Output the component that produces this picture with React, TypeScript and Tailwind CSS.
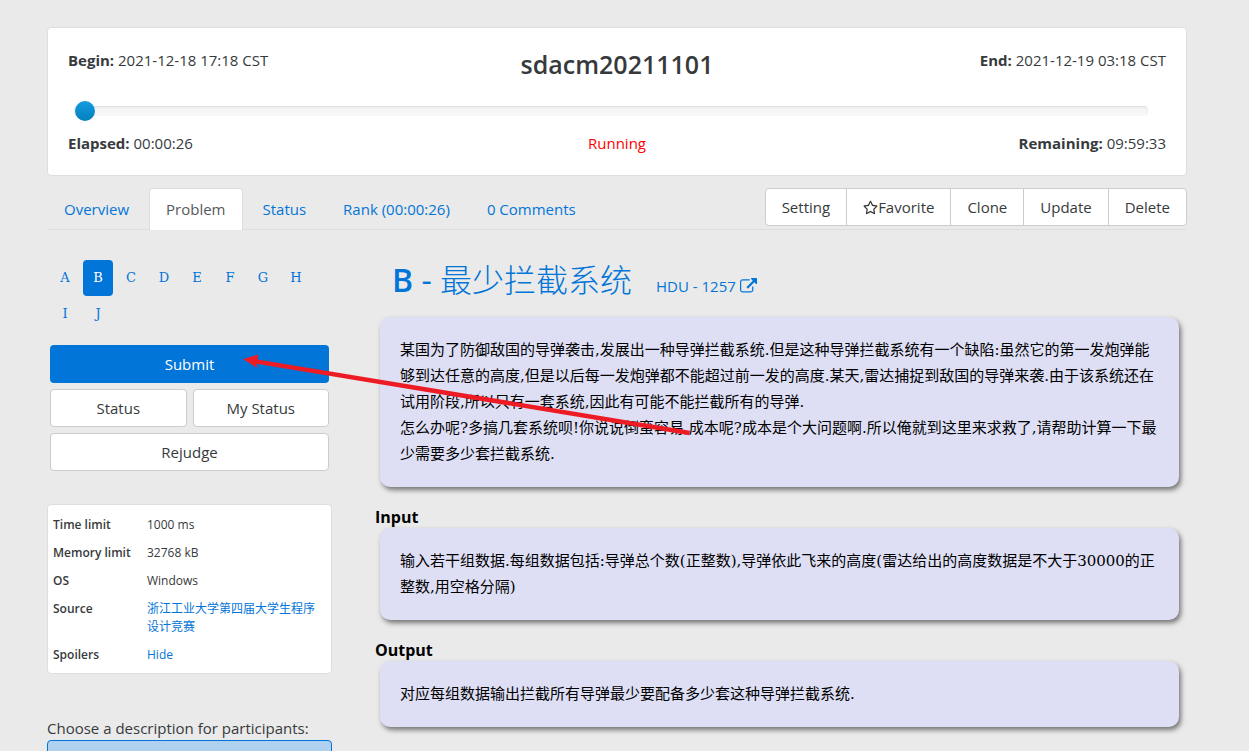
import { FaRegStar } from 'react-icons/fa';

const tabs = ['Overview', 'Problem', 'Status', 'Rank (00:00:26)', '0 Comments'];
const actions = ['Setting', 'Favorite', 'Clone', 'Update', 'Delete'];
const letters = ['A', 'B', 'C', 'D', 'E', 'F', 'G', 'H', 'I', 'J'];

const sections = [
  {
    title: '',
    paragraphs: [
      '某国为了防御敌国的导弹袭击,发展出一种导弹拦截系统.但是这种导弹拦截系统有一个缺陷:虽然它的第一发炮弹能够到达任意的高度,但是以后每一发炮弹都不能超过前一发的高度.某天,雷达捕捉到敌国的导弹来袭.由于该系统还在试用阶段,所以只有一套系统,因此有可能不能拦截所有的导弹.',
      '怎么办呢?多搞几套系统呗!你说说倒蛮容易,成本呢?成本是个大问题啊.所以俺就到这里来求救了,请帮助计算一下最少需要多少套拦截系统.',
    ],
  },
  {
    title: 'Input',
    paragraphs: [
      '输入若干组数据.每组数据包括:导弹总个数(正整数),导弹依此飞来的高度(雷达给出的高度数据是不大于30000的正整数,用空格分隔)',
    ],
  },
  {
    title: 'Output',
    paragraphs: ['对应每组数据输出拦截所有导弹最少要配备多少套这种导弹拦截系统.'],
  },
];

const plainButton = 'h-[38px] rounded border border-[#ccc] bg-white text-[#373a3c] hover:bg-gray-100';

function ExternalLinkIcon() {
  return (
    <svg className="size-[17px]" viewBox="0 0 1792 1792" fill="currentColor" aria-hidden="true">
      <path d="M1408 928v320q0 119-84.5 203.5t-203.5 84.5h-832q-119 0-203.500-84.500t-84.500-203.500v-832q0-119 84.500-203.500t203.500-84.500h704q14 0 23 9t9 23v64q0 14-9 23t-23 9h-704q-66 0-113 47t-47 113v832q0 66 47 113t113 47h832q66 0 113-47t47-113v-320q0-14 9-23t23-9h64q14 0 23 9t9 23zm384-864v512q0 26-19 45t-45 19-45-19l-176-176-652 652q-10 10-23 10t-23-10l-114-114q-10-10-10-23t10-23l652-652-176-176q-19-19-19-45t19-45 45-19h512q26 0 45 19t19 45z" />
    </svg>
  );
}

function ContestHeader() {
  return (
    <header className="rounded border border-[#dedede] bg-white px-5 py-5">
      <div className="grid grid-cols-3 items-start">
        <div>
          <b>Begin:</b> 2021-12-18 17:18 CST
        </div>
        <h1 className="text-center text-[25px] leading-8 font-semibold">sdacm20211101</h1>
        <div className="text-right">
          <b>End:</b> 2021-12-19 03:18 CST
        </div>
      </div>
      <input
        type="range"
        min={0}
        max={36000}
        defaultValue={26}
        aria-label="Contest progress"
        className="mt-[26px] ml-1.5 block h-[10px] w-[calc(100%-24px)] appearance-none rounded bg-[#f7f7f7] bg-linear-to-b from-[#f3f3f3] to-[#f9f9f9] shadow-[inset_0_1px_2px_rgba(0,0,0,0.1)] [&::-webkit-slider-thumb]:size-5 [&::-webkit-slider-thumb]:appearance-none [&::-webkit-slider-thumb]:rounded-full [&::-webkit-slider-thumb]:bg-linear-to-b [&::-webkit-slider-thumb]:from-[#149bdf] [&::-webkit-slider-thumb]:to-[#0480be]"
      />
      <div className="mt-[15px] grid grid-cols-3">
        <div>
          <b>Elapsed:</b> 00:00:26
        </div>
        <div className="text-center text-[#ff0000]">Running</div>
        <div className="text-right">
          <b>Remaining:</b> 09:59:33
        </div>
      </div>
    </header>
  );
}

function ContestNav() {
  return (
    <nav className="mt-3 flex items-start justify-between border-b border-[#ddd]">
      <div className="-mb-px flex gap-[3px]">
        {tabs.map((tab) => (
          <a
            key={tab}
            href="#"
            className={
              tab === 'Problem'
                ? 'h-[42px] rounded-t border border-b-0 border-[#ddd] bg-white px-4 pt-2 text-[#55595c]'
                : 'h-[42px] border border-b-0 border-transparent px-4 pt-2 text-[#0275d8]'
            }
          >
            {tab}
          </a>
        ))}
      </div>
      <div className="flex">
        {actions.map((action) => (
          <button
            key={action}
            className="-ml-px flex h-[38px] items-center border border-[#ccc] bg-white px-4 first:rounded-l last:rounded-r hover:bg-gray-100"
          >
            {action === 'Favorite' && <FaRegStar className="size-[15px]" />}
            {action}
          </button>
        ))}
      </div>
    </nav>
  );
}

function Sidebar() {
  return (
    <aside className="w-[285px] shrink-0">
      <div className='flex flex-wrap gap-x-[3px] px-[3px] font-["DejaVu_Serif",serif] text-[13px]'>
        {letters.map((letter) => (
          <a
            key={letter}
            href="#"
            className={
              letter === 'B'
                ? 'flex h-9 w-[30px] items-center justify-center rounded bg-[#0275d8] text-white'
                : 'flex h-9 w-[30px] items-center justify-center rounded text-[#0275d8]'
            }
          >
            {letter}
          </a>
        ))}
      </div>

      <div className="mt-[13px] grid grid-cols-2 gap-1.5 px-[3px]">
        <button className="col-span-2 h-[38px] rounded bg-[#0275d8] text-white hover:bg-blue-700">Submit</button>
        <button className={plainButton}>Status</button>
        <button className={plainButton}>My Status</button>
        <button className={`col-span-2 ${plainButton}`}>Rejudge</button>
      </div>

      <div className="mt-[33px] rounded border border-[#dedede] bg-white pt-1.5 pb-1">
        <table className="w-full table-fixed text-left text-xs leading-[18px]">
          <tbody>
            <tr>
              <th className="w-[94px] py-[5px] pl-[5px] align-top font-semibold">Time limit</th>
              <td className="py-[5px] pr-3 pl-[5px]">1000 ms</td>
            </tr>
            <tr>
              <th className="py-[5px] pl-[5px] align-top font-semibold">Memory limit</th>
              <td className="py-[5px] pr-3 pl-[5px]">32768 kB</td>
            </tr>
            <tr>
              <th className="py-[5px] pl-[5px] align-top font-semibold">OS</th>
              <td className="py-[5px] pr-3 pl-[5px]">Windows</td>
            </tr>
            <tr>
              <th className="py-[5px] pl-[5px] align-top font-semibold">Source</th>
              <td className="py-[5px] pr-3 pl-[5px]">
                <a href="#" className="text-[#0275d8]">浙江工业大学第四届大学生程序设计竞赛</a>
              </td>
            </tr>
            <tr>
              <th className="py-[5px] pl-[5px] align-top font-semibold">Spoilers</th>
              <td className="py-[5px] pr-3 pl-[5px]">
                <a href="#" className="text-[#0275d8]">Hide</a>
              </td>
            </tr>
          </tbody>
        </table>
      </div>

      <p className="mt-[42px]">Choose a description for participants:</p>
      <div className="h-16 rounded-t border border-[#0275d8] bg-[#b0d0f0]" />
    </aside>
  );
}

function Problem() {
  return (
    <main className="min-w-0 flex-1 pr-2">
      <div className="flex items-baseline gap-6 pl-[17px] text-[#0275d8]">
        <h2 className="text-[32px] leading-10 font-light">
          <span className="font-semibold">B</span> <span className="font-medium">-</span> 最少拦截系统
        </h2>
        <a href="#" className="flex items-center gap-1">
          HDU - 1257 <ExternalLinkIcon />
        </a>
      </div>
      <div className="mt-[17px]">
        {sections.map((section) => (
          <section key={section.title} className="mb-5">
            {section.title && <h3 className="text-base leading-[21px] font-bold text-black">{section.title}</h3>}
            <div className='ml-[5px] rounded-[10px] bg-[#dedff5] p-5 font-["DejaVu_Serif","Noto_Sans_CJK_SC",serif] text-[15px] leading-[26px] text-black shadow-[2px_3px_5px_rgba(0,0,0,0.5)]'>
              {section.paragraphs.map((text) => (
                <p key={text}>{text}</p>
              ))}
            </div>
          </section>
        ))}
      </div>
    </main>
  );
}

export default function App() {
  return (
    <div className='relative h-screen overflow-hidden bg-[#eaeaea] pt-[27px] pr-[62px] pl-[47px] font-["Open_Sans","Noto_Sans_CJK_SC",sans-serif] text-[15px] leading-6 text-[#373a3c]'>
      <ContestHeader />
      <ContestNav />
      <div className="mt-[30px] flex gap-[43px]">
        <Sidebar />
        <Problem />
      </div>

      {/* Arrow pointing at the submit button */}
      <svg
        className="pointer-events-none absolute top-[350px] left-[240px]"
        width="455"
        height="90"
        viewBox="240 350 455 90"
        fill="#ed1c24"
        aria-hidden="true"
      >
        <path d="M243 359 L258.500 354.500 L257.500 359.500 L690 430.700 L689.300 435.300 L256.500 363.800 L257 368 Z" />
      </svg>
    </div>
  );
}
